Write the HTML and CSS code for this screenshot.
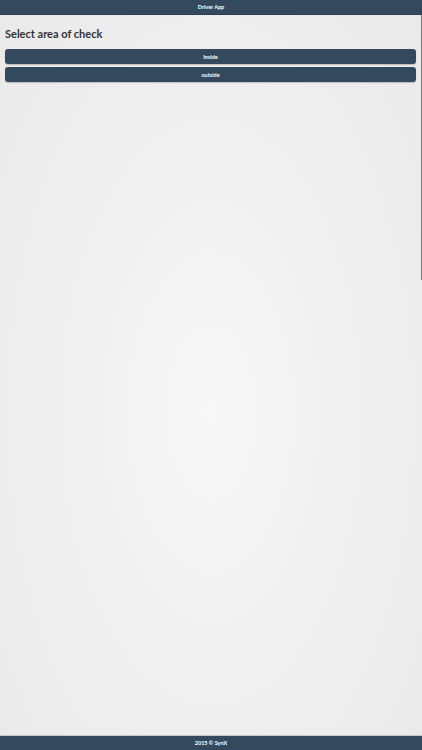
FILE: index.html
```html
<!DOCTYPE html>
<html>
<head>
<meta charset="utf-8">
<link rel="stylesheet" href="styles.css">
</head>
<body>
<div class="app">
  <header class="topbar">Driver App</header>
  <main class="content">
    <h1 class="title">Select area of check</h1>
    <div class="buttons">
      <button class="btn">Inside</button>
      <button class="btn">outside</button>
    </div>
  </main>
  <footer class="footbar">2015 © SynX</footer>
  <div class="scroll-line"></div>
</div>
</body>
</html>
```
FILE: styles.css
```css
* { box-sizing: border-box; }
html, body { margin: 0; padding: 0; height: 100%; }
body {
  font-family: Lato, "Liberation Sans", sans-serif;
  background: #ececec;
}
.app {
  position: relative;
  height: 750px;
  display: flex;
  flex-direction: column;
  background: radial-gradient(ellipse at 50% 55%, #f8f8f8 0%, #f0f0f0 45%, #e9e9e9 100%);
}
.topbar {
  height: 15px;
  background: #34495e;
  color: #fff;
  font-weight: 700;
  font-size: 5.5px;
  display: flex;
  align-items: center;
  justify-content: center;
  border-bottom: 1px solid #2c3e50;
}
.content {
  flex: 1;
  padding: 12px 6px 0 5px;
}
.title {
  margin: 0 0 8px 0;
  font-size: 11px;
  font-weight: 700;
  color: #333;
  line-height: 14px;
}
.buttons {
  display: flex;
  flex-direction: column;
  gap: 3px;
}
.btn {
  height: 15px;
  border: none;
  border-radius: 3px;
  background: #34495e;
  color: #fff;
  font-family: Lato, "Liberation Sans", sans-serif;
  font-weight: 700;
  font-size: 5.5px;
  padding: 0;
  box-shadow: 0 1px 1px rgba(0,0,0,0.2);
}
.footbar {
  height: 15px;
  background: #34495e;
  color: #fff;
  font-weight: 700;
  font-size: 5.5px;
  display: flex;
  align-items: center;
  justify-content: center;
  border-top: 1px solid #c8c8c8;
}
.scroll-line {
  position: absolute;
  right: 0;
  top: 15px;
  width: 1px;
  height: 265px;
  background: #7a7a7a;
}
```
